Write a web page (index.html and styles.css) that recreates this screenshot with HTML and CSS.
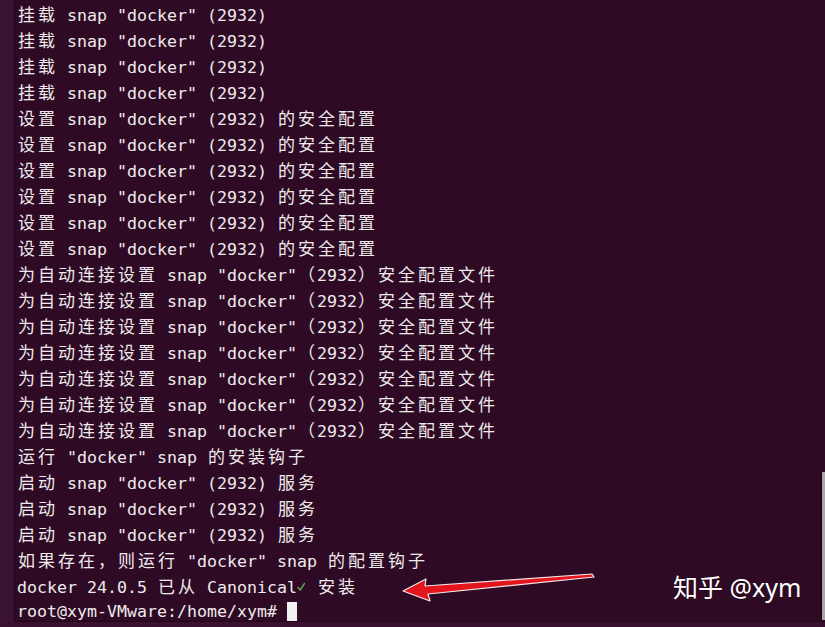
FILE: index.html
```html
<!DOCTYPE html>
<html lang="zh-CN">
<head>
<meta charset="utf-8">
<title>Terminal</title>
<link rel="stylesheet" href="styles.css">
</head>
<body>
<div class="window">
  <div class="gutter"></div>
  <div class="term">
    <div class="line"><span class="c">挂载</span> snap "docker" (2932)</div>
    <div class="line"><span class="c">挂载</span> snap "docker" (2932)</div>
    <div class="line"><span class="c">挂载</span> snap "docker" (2932)</div>
    <div class="line"><span class="c">挂载</span> snap "docker" (2932)</div>
    <div class="line"><span class="c">设置</span> snap "docker" (2932) <span class="c">的安全配置</span></div>
    <div class="line"><span class="c">设置</span> snap "docker" (2932) <span class="c">的安全配置</span></div>
    <div class="line"><span class="c">设置</span> snap "docker" (2932) <span class="c">的安全配置</span></div>
    <div class="line"><span class="c">设置</span> snap "docker" (2932) <span class="c">的安全配置</span></div>
    <div class="line"><span class="c">设置</span> snap "docker" (2932) <span class="c">的安全配置</span></div>
    <div class="line"><span class="c">设置</span> snap "docker" (2932) <span class="c">的安全配置</span></div>
    <div class="line"><span class="c">为自动连接设置</span> snap "docker"<span class="c">（</span>2932<span class="c">）安全配置文件</span></div>
    <div class="line"><span class="c">为自动连接设置</span> snap "docker"<span class="c">（</span>2932<span class="c">）安全配置文件</span></div>
    <div class="line"><span class="c">为自动连接设置</span> snap "docker"<span class="c">（</span>2932<span class="c">）安全配置文件</span></div>
    <div class="line"><span class="c">为自动连接设置</span> snap "docker"<span class="c">（</span>2932<span class="c">）安全配置文件</span></div>
    <div class="line"><span class="c">为自动连接设置</span> snap "docker"<span class="c">（</span>2932<span class="c">）安全配置文件</span></div>
    <div class="line"><span class="c">为自动连接设置</span> snap "docker"<span class="c">（</span>2932<span class="c">）安全配置文件</span></div>
    <div class="line"><span class="c">为自动连接设置</span> snap "docker"<span class="c">（</span>2932<span class="c">）安全配置文件</span></div>
    <div class="line"><span class="c">运行</span> "docker" snap <span class="c">的安装钩子</span></div>
    <div class="line"><span class="c">启动</span> snap "docker" (2932) <span class="c">服务</span></div>
    <div class="line"><span class="c">启动</span> snap "docker" (2932) <span class="c">服务</span></div>
    <div class="line"><span class="c">启动</span> snap "docker" (2932) <span class="c">服务</span></div>
    <div class="line"><span class="c">如果存在，则运行</span> "docker" snap <span class="c">的配置钩子</span></div>
    <div class="line">docker 24.0.5 <span class="c">已从</span> Canonical<svg class="check" width="10" height="26" viewBox="0 0 10 26" xmlns="http://www.w3.org/2000/svg"><polyline points="1,14.5 3.2,17 7.5,10.5" fill="none" stroke="#5fa55a" stroke-width="1.4" stroke-linecap="round" stroke-linejoin="round"/></svg> <span class="c">安装</span></div>
    <div class="line">root@xym-VMware:/home/xym# <span class="cursor"></span></div>

    <svg class="arrow" width="200" height="34" viewBox="400 570 200 34" xmlns="http://www.w3.org/2000/svg">
      <polygon points="403,590 426,578 425,585 592,573 594,576 428,593 430,600" fill="#e3141c" stroke="#f4e6ea" stroke-width="1.2" stroke-linejoin="round"/>
    </svg>
    <div class="watermark">知乎 @xym</div>
    <div class="scrollbar"></div>
  </div>
</div>
</body>
</html>
```

FILE: styles.css
```css
html, body {
  margin: 0;
  padding: 0;
}

body {
  width: 825px;
  height: 627px;
  overflow: hidden;
  background: #3a1230;
}

.window {
  display: flex;
  height: 622px;
}

.gutter {
  width: 14px;
  flex: none;
  background: #3b1332;
}

.term {
  position: relative;
  flex: 1;
  background: #2e0a24;
  border-left: 1px solid #220619;
  border-bottom: 1px solid #1f0517;
  padding: 1px 0 0 2px;
  font-family: "DejaVu Sans Mono", "Liberation Mono", monospace;
  font-size: 16.61px;
  color: #eeeaec;
}

.line {
  height: 26px;
  line-height: 26px;
  white-space: pre;
}

.c {
  font-family: "Noto Sans CJK SC", "Noto Sans CJK JP", sans-serif;
  font-size: 17px;
  letter-spacing: 3px;
  padding-left: 1px;
  margin-right: -1px;
}

.check {
  display: inline-block;
  vertical-align: top;
}

.cursor {
  display: inline-block;
  width: 10px;
  height: 19px;
  background: #f2f0f1;
  vertical-align: -4px;
}

.arrow {
  position: absolute;
  left: 385px;
  top: 571px;
}

.watermark {
  position: absolute;
  left: 658px;
  top: 572px;
  font-family: "Noto Sans", "Noto Sans CJK SC", sans-serif;
  font-size: 25px;
  line-height: 30px;
  color: #ffffff;
  white-space: nowrap;
  text-shadow: 0 0 1px rgba(0,0,0,0.4);
}

.scrollbar {
  position: absolute;
  right: 0;
  top: 472px;
  width: 3px;
  height: 148px;
  background: #aea5aa;
  border-left: 1px solid #1c0414;
}
```
